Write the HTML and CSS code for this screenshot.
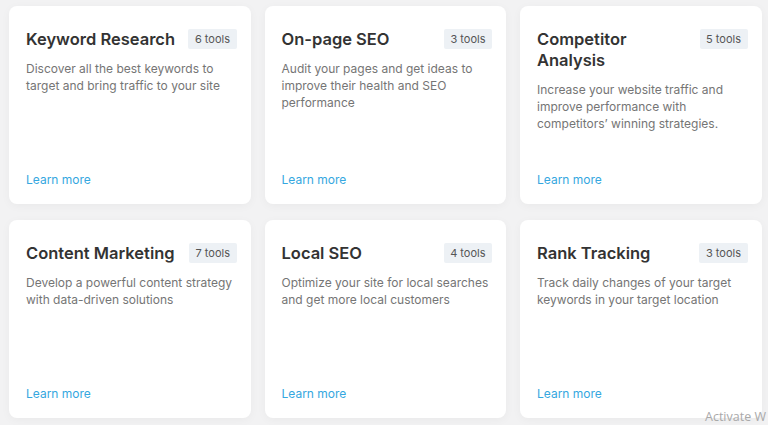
FILE: index.html
```html
<!DOCTYPE html>
<html lang="en">
<head>
    <meta charset="UTF-8">
    <meta name="viewport" content="width=device-width, initial-scale=1.0">
    <title>SEO Toolkits</title>
    <link rel="stylesheet" href="styles.css">
</head>
<body>
    <div class="cards">
        <div class="card">
            <div class="card-head">
                <h3 class="card-title">Keyword Research</h3>
                <span class="badge">6 tools</span>
            </div>
            <p class="card-text">Discover all the best keywords to target and bring traffic to your site</p>
            <a href="#" class="learn">Learn more</a>
        </div>
        <div class="card">
            <div class="card-head">
                <h3 class="card-title">On-page SEO</h3>
                <span class="badge">3 tools</span>
            </div>
            <p class="card-text">Audit your pages and get ideas to improve their health and SEO performance</p>
            <a href="#" class="learn">Learn more</a>
        </div>
        <div class="card">
            <div class="card-head">
                <h3 class="card-title">Competitor<br>Analysis</h3>
                <span class="badge">5 tools</span>
            </div>
            <p class="card-text">Increase your website traffic and improve performance with competitors’ winning strategies.</p>
            <a href="#" class="learn">Learn more</a>
        </div>
        <div class="card">
            <div class="card-head">
                <h3 class="card-title">Content Marketing</h3>
                <span class="badge">7 tools</span>
            </div>
            <p class="card-text">Develop a powerful content strategy with data-driven solutions</p>
            <a href="#" class="learn">Learn more</a>
        </div>
        <div class="card">
            <div class="card-head">
                <h3 class="card-title">Local SEO</h3>
                <span class="badge">4 tools</span>
            </div>
            <p class="card-text">Optimize your site for local searches and get more local customers</p>
            <a href="#" class="learn">Learn more</a>
        </div>
        <div class="card">
            <div class="card-head">
                <h3 class="card-title">Rank Tracking</h3>
                <span class="badge">3 tools</span>
            </div>
            <p class="card-text">Track daily changes of your target keywords in your target location</p>
            <a href="#" class="learn">Learn more</a>
        </div>
    </div>

    <div class="watermark">Activate W</div>
</body>
</html>
```

FILE: styles.css
```css
body {
    margin: 0;
    padding: 6px 0 0 9px;
    background: #f2f2f3;
    font-family: Inter, "Noto Sans", sans-serif;
    color: #333;
    overflow: hidden;
    height: 425px;
    box-sizing: border-box;
}
.cards {
    display: grid;
    grid-template-columns: repeat(3, 241.5px);
    column-gap: 14px;
    row-gap: 16px;
}
.card {
    background: #fff;
    border-radius: 8px;
    box-shadow: 0 2px 10px rgba(0,0,0,0.04);
    height: 198px;
    box-sizing: border-box;
    padding: 23px 14px 16px 17px;
    display: flex;
    flex-direction: column;
}
.card-head {
    display: flex;
    justify-content: space-between;
    align-items: flex-start;
    gap: 6px;
}
.card-title {
    margin: 0;
    font-size: 16.5px;
    font-weight: 600;
    line-height: 21px;
    color: #333;
}
.badge {
    flex-shrink: 0;
    margin-top: 0;
    background: #edf1f5;
    color: #555;
    font-size: 11px;
    line-height: 20px;
    padding: 0 6.5px;
    border-radius: 2px;
}
.card-text {
    margin: 10px 0 0;
    font-size: 12px;
    line-height: 17px;
    color: #757575;
}
.learn {
    margin-top: auto;
    font-size: 12px;
    line-height: 17px;
    color: #35a7e0;
    text-decoration: none;
}
.watermark {
    position: absolute;
    left: 705px;
    top: 409px;
    font-family: "Open Sans", sans-serif;
    font-size: 12.5px;
    line-height: 16px;
    color: #a9a9a9;
    white-space: nowrap;
}
```
